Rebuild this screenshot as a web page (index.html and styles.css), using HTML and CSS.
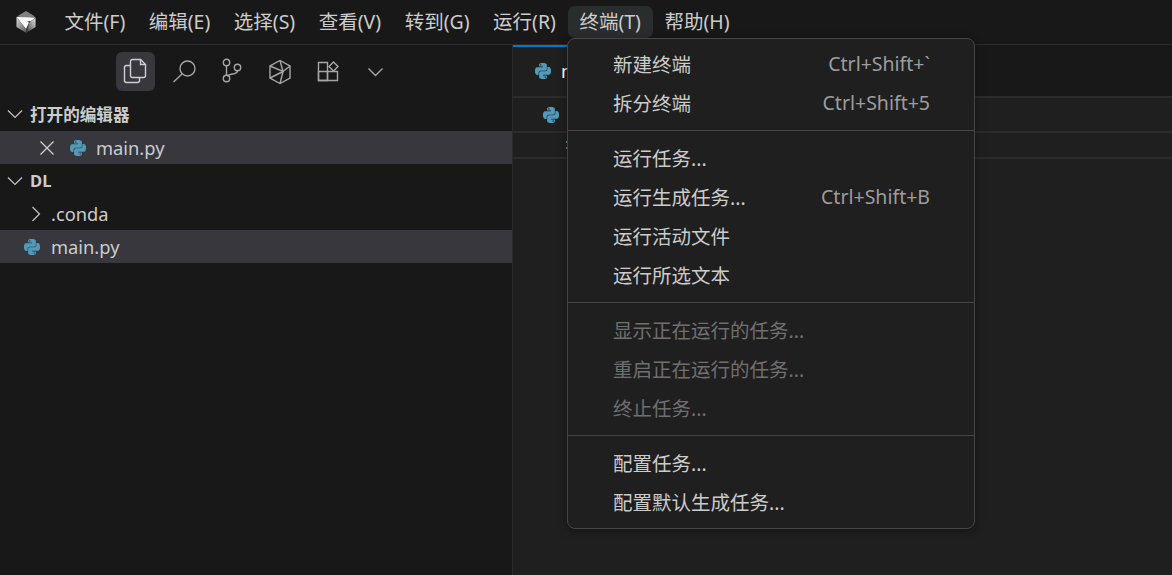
FILE: index.html
```html
<!DOCTYPE html>
<html lang="zh-CN">
<head>
<meta charset="utf-8">
<title>终端菜单</title>
<link rel="stylesheet" href="styles.css">
</head>
<body>
<svg class="defs" width="0" height="0" aria-hidden="true">
  <defs>
    <linearGradient id="logo-left" x1="0" y1="0" x2="1" y2="1">
      <stop offset="0" stop-color="#d8d8d8"/>
      <stop offset="1" stop-color="#5a5a5a"/>
    </linearGradient>
    <linearGradient id="logo-right" x1="1" y1="0" x2="0" y2="1">
      <stop offset="0" stop-color="#e6e6e6"/>
      <stop offset="1" stop-color="#3a3a3a"/>
    </linearGradient>
  </defs>
  <symbol id="py" viewBox="0 0 24 24">
    <path fill="#519aba" d="M14.25.18l.9.2.73.26.59.3.45.32.34.34.25.34.16.33.1.3.04.26.02.2-.01.13V8.5l-.05.63-.13.55-.21.46-.26.38-.3.31-.33.25-.35.19-.35.14-.33.1-.3.07-.26.04-.21.02H8.77l-.69.05-.59.14-.5.22-.41.27-.33.32-.27.35-.2.36-.15.37-.1.35-.07.32-.04.27-.02.21v3.06H3.17l-.21-.03-.28-.07-.32-.12-.35-.18-.36-.26-.36-.36-.35-.46-.32-.59-.28-.73-.21-.88-.14-1.05-.05-1.23.06-1.22.16-1.04.24-.87.32-.71.36-.57.4-.44.42-.33.42-.24.4-.16.36-.1.32-.05.24-.01h.16l.06.01h8.16v-.83H6.18l-.01-2.75-.02-.37.05-.34.11-.31.17-.28.25-.26.31-.23.38-.2.44-.18.51-.15.58-.12.64-.1.71-.06.77-.04.84-.02 1.27.05zm-6.3 1.98l-.23.33-.08.41.08.41.23.34.33.22.41.09.41-.09.33-.22.23-.34.08-.41-.08-.41-.23-.33-.33-.22-.41-.09-.41.09zm13.09 3.95l.28.06.32.12.35.18.36.27.36.35.35.47.32.59.28.73.21.88.14 1.04.05 1.23-.06 1.23-.16 1.04-.24.86-.32.71-.36.57-.4.45-.42.33-.42.24-.4.16-.36.09-.32.05-.24.02-.16-.01h-8.22v.82h5.84l.01 2.76.02.36-.05.34-.11.31-.17.29-.25.25-.31.24-.38.2-.44.17-.51.15-.58.13-.64.09-.71.07-.77.04-.84.01-1.27-.04-1.07-.14-.9-.2-.73-.25-.59-.3-.45-.33-.34-.34-.25-.34-.16-.33-.1-.3-.04-.25-.02-.2.01-.13v-5.34l.05-.64.13-.54.21-.46.26-.38.3-.32.33-.24.35-.2.35-.14.33-.1.3-.06.26-.04.21-.02.13-.01h5.84l.69-.05.59-.14.5-.21.41-.28.33-.32.27-.35.2-.36.15-.36.1-.35.07-.32.04-.28.02-.21V6.07h2.09l.14.01zm-6.47 14.25l-.23.33-.08.41.08.41.23.33.33.23.41.08.41-.08.33-.23.23-.33.08-.41-.08-.41-.23-.33-.33-.23-.41-.08-.41.08z"/>
  </symbol>
  <symbol id="chev-down" viewBox="0 0 16 16">
    <path d="M1 4.5L8 11.5l7-7" fill="none" stroke="#c5c5c5" stroke-width="1.2"/>
  </symbol>
  <symbol id="chev-right" viewBox="0 0 16 16">
    <path d="M4.5 1L11.5 8l-7 7" fill="none" stroke="#c5c5c5" stroke-width="1.2"/>
  </symbol>
</svg>

<header class="titlebar">
  <svg class="logo" width="20" height="22" viewBox="0 0 20 22">
    <polygon points="10,0 19.5,5.5 19.5,16.5 10,22 0.5,16.5 0.5,5.5" fill="#2e2e2e"/>
    <polygon points="10,0 19,5.5 10,7 1,5.5" fill="#808080"/>
    <polygon points="0.5,6 19.5,6.5 15,10 11,10.5 13,11.5 10,18" fill="#fafafa"/>
    <polygon points="0.5,6 10,18 10,21.5 0.5,16" fill="url(#logo-left)"/>
    <polygon points="15,10 19.5,7 19.5,16 10.5,21.5 13,12" fill="url(#logo-right)"/>
  </svg>
  <nav class="menubar">
    <span class="menubar-item">文件(F)</span>
    <span class="menubar-item">编辑(E)</span>
    <span class="menubar-item">选择(S)</span>
    <span class="menubar-item">查看(V)</span>
    <span class="menubar-item">转到(G)</span>
    <span class="menubar-item">运行(R)</span>
    <span class="menubar-item is-open">终端(T)</span>
    <span class="menubar-item">帮助(H)</span>
  </nav>
</header>

<div class="workbench">
  <aside class="sidebar">
    <div class="activity">
      <span class="act is-active">
        <svg class="act-icon" viewBox="0 0 28 28"><path d="M8.5 7.5H4.5a2 2 0 0 0-2 2v13a2 2 0 0 0 2 2h11a2 2 0 0 0 2-2v-3"/><path d="M10.5 1.5h8l5 5v11a2 2 0 0 1-2 2h-11a2 2 0 0 1-2-2v-14a2 2 0 0 1 2-2z"/><path d="M18.5 1.5v5h5"/></svg>
      </span>
      <span class="act">
        <svg class="act-icon" viewBox="0 0 28 28"><circle cx="17.5" cy="10.5" r="7.5"/><path d="M12 16L3.5 24"/></svg>
      </span>
      <span class="act">
        <svg class="act-icon" viewBox="0 0 28 28"><circle cx="8.5" cy="4.5" r="3.2"/><circle cx="8.5" cy="20.5" r="3.2"/><circle cx="19.5" cy="9.5" r="3.2"/><path d="M8.5 7.7v9.6"/><path d="M19.5 12.7c0 4.3-7.5 2.3-10.5 5.3"/></svg>
      </span>
      <span class="act">
        <svg class="act-icon" viewBox="0 0 28 28"><path d="M14 2.5l10 5.5v12l-10 5.5L4 20V8z"/><path d="M4 8l13 5.5L24 8"/><path d="M4 20l13-6.5"/><path d="M17 13.5L14 25.5"/><path d="M14 2.5l3 11"/></svg>
      </span>
      <span class="act">
        <svg class="act-icon" viewBox="0 0 28 28"><path d="M4.5 4.5h9v18h-9z"/><path d="M4.5 13.5h19v9h-19z"/><path d="M13.5 13.5v9"/><path d="M19.5 4l4.5 4.5-4.5 4.5-4.5-4.5z"/></svg>
      </span>
      <span class="act">
        <svg class="act-icon" viewBox="0 0 28 28"><path d="M6.5 10.5l7 7 7-7"/></svg>
      </span>
    </div>

    <div class="tree-row section">
      <svg class="chev"><use href="#chev-down"/></svg>
      <span class="tree-head">打开的编辑器</span>
    </div>
    <div class="tree-row selected open-file">
      <svg class="close" viewBox="0 0 16 16"><path d="M1.5 1.5l13 13M14.5 1.5l-13 13" fill="none" stroke="#d4d4d4" stroke-width="1.2"/></svg>
      <svg class="py"><use href="#py"/></svg>
      <span class="tree-label">main.py</span>
    </div>
    <div class="tree-row root">
      <svg class="chev"><use href="#chev-down"/></svg>
      <span class="tree-head">DL</span>
    </div>
    <div class="tree-row folder">
      <svg class="chev"><use href="#chev-right"/></svg>
      <span class="tree-label">.conda</span>
    </div>
    <div class="tree-row selected file">
      <svg class="py"><use href="#py"/></svg>
      <span class="tree-label">main.py</span>
    </div>
  </aside>

  <main class="editor">
    <div class="tabs">
      <div class="tab">
        <svg class="py"><use href="#py"/></svg>
        <span class="tab-label">main.py</span>
      </div>
    </div>
    <div class="crumbs">
      <svg class="py"><use href="#py"/></svg>
    </div>
    <div class="code-line"><span class="code-text">:</span></div>
  </main>
</div>

<section class="menu">
  <div class="menu-item"><span>新建终端</span><span class="key">Ctrl+Shift+`</span></div>
  <div class="menu-item"><span>拆分终端</span><span class="key">Ctrl+Shift+5</span></div>
  <hr class="menu-sep">
  <div class="menu-item"><span>运行任务...</span></div>
  <div class="menu-item"><span>运行生成任务...</span><span class="key">Ctrl+Shift+B</span></div>
  <div class="menu-item"><span>运行活动文件</span></div>
  <div class="menu-item"><span>运行所选文本</span></div>
  <hr class="menu-sep">
  <div class="menu-item is-disabled"><span>显示正在运行的任务...</span></div>
  <div class="menu-item is-disabled"><span>重启正在运行的任务...</span></div>
  <div class="menu-item is-disabled"><span>终止任务...</span></div>
  <hr class="menu-sep">
  <div class="menu-item"><span>配置任务...</span></div>
  <div class="menu-item"><span>配置默认生成任务...</span></div>
</section>
</body>
</html>
```
FILE: styles.css
```css
* { box-sizing: border-box; }
html, body { height: 100%; }
body {
  margin: 0;
  background: #181818;
  color: #cccccc;
  font-family: "Noto Sans", "Noto Sans CJK SC", sans-serif;
  font-size: 19.5px;
  overflow: hidden;
  display: flex;
  flex-direction: column;
}
.defs { position: absolute; }

.titlebar {
  height: 45px;
  flex: none;
  display: flex;
  align-items: flex-start;
  background: #181818;
  border-bottom: 1px solid #2b2b2b;
  padding-left: 16px;
}
.logo { margin-top: 11px; flex: none; }
.menubar { display: flex; margin-left: 16.7px; padding-top: 6px; }
.menubar-item {
  height: 32px;
  line-height: 31px;
  padding: 0 11.75px;
  border-radius: 7px;
  white-space: nowrap;
  color: #cccccc;
}
.menubar-item.is-open { background: #2a2d2e; }

.workbench { flex: 1; display: flex; min-height: 0; }

.sidebar {
  width: 513px;
  flex: none;
  background: #181818;
  border-right: 1px solid #2b2b2b;
}
.activity {
  display: flex;
  justify-content: center;
  gap: 9px;
  padding: 7px 1px 8px 0;
}
.act {
  width: 39px;
  height: 39px;
  border-radius: 6px;
  display: flex;
  align-items: center;
  justify-content: center;
}
.act.is-active { background: #37373d; }
.act-icon {
  width: 28px;
  height: 28px;
  fill: none;
  stroke: #a6a6a6;
  stroke-width: 1.4;
}
.is-active .act-icon { stroke: #cfcfcf; }

.tree-row {
  height: 33px;
  display: flex;
  align-items: center;
  white-space: nowrap;
}
.tree-row.selected { background: #37373d; }
.section, .root { padding-left: 7px; }
.section { height: 32px; padding-bottom: 2px; }
.tree-head { font-size: 16.6px; font-weight: 700; color: #cccccc; margin-left: 7px; }
.tree-label { color: #cccccc; font-size: 18.3px; }
.chev { width: 16px; height: 16px; flex: none; }
.close { width: 16px; height: 16px; flex: none; margin-left: 39px; }
.py { width: 16px; height: 16px; flex: none; }
.open-file .py { margin-left: 15px; }
.open-file .tree-label { margin-left: 10px; }
.folder { padding-left: 28px; }
.folder .tree-label { margin-left: 7px; }
.file { padding-left: 24px; }
.file .tree-label { margin-left: 11px; }

.editor { flex: 1; background: #1f1f1f; min-width: 0; }
.tabs {
  height: 53px;
  background: #181818;
  border-bottom: 2px solid #2b2b2b;
  display: flex;
}
.tab {
  width: 150px;
  height: 51px;
  background: #1f1f1f;
  border-top: 2px solid #0078d4;
  display: flex;
  align-items: center;
  padding-left: 22px;
  padding-bottom: 2px;
}
.tab-label { margin-left: 10px; color: #ffffff; font-size: 18.3px; }
.crumbs {
  height: 35px;
  border-bottom: 2px solid #2b2b2b;
  display: flex;
  align-items: center;
  padding-left: 30px;
}
.code-line {
  height: 26px;
  border-bottom: 2px solid #2b2b2b;
  padding-left: 52px;
  line-height: 22px;
  font-size: 14px;
  color: #9a9a9a;
}
.code-text { display: block; }

.menu {
  position: absolute;
  left: 567px;
  top: 38px;
  width: 408px;
  height: 491px;
  padding: 5px 0;
  background: #1f1f1f;
  border: 1px solid #454545;
  border-radius: 8px;
  box-shadow: 0 2px 10px rgba(0, 0, 0, 0.36);
}
.menu-item {
  height: 39px;
  display: flex;
  align-items: center;
  justify-content: space-between;
  padding: 0 44px 0 45px;
  color: #cccccc;
  white-space: nowrap;
}
.menu-item.is-disabled { color: #6f6f6f; }
.key { color: #9d9d9d; }
.menu-sep {
  height: 1px;
  margin: 8px 0 7px;
  border: 0;
  background: #454545;
}
```
